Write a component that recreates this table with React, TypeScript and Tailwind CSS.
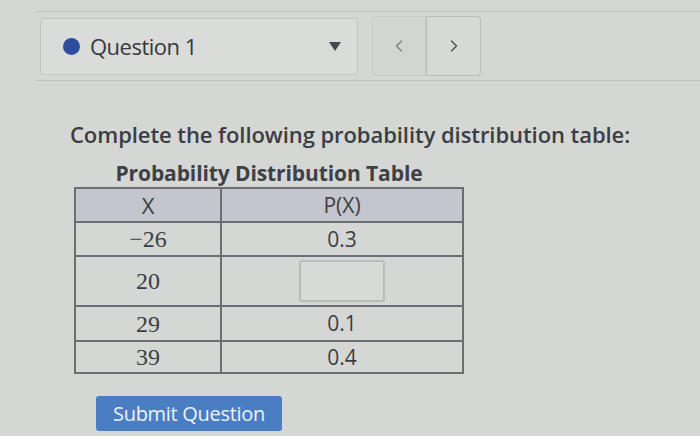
import { ChevronLeft, ChevronRight } from "lucide-react"

const rows = [
  { x: "−26", p: "0.3", h: "h-[34px]" },
  { x: "20", p: null, h: "h-[50px]" },
  { x: "29", p: "0.1", h: "h-[35px]" },
  { x: "39", p: "0.4", h: "h-[32px]" },
]

export default function App() {
  return (
    <div className="w-[700px] h-[436px] overflow-hidden bg-[#d4d7d4] text-[#3b3f45] font-['Open_Sans',sans-serif]">
      {/* Question header */}
      <div className="ml-[36px] mt-[11px] h-[70px] border-y border-[#bfc2c0] flex items-center gap-[14px] pl-[4px]">
        <div className="w-[318px] h-[57px] rounded-[4px] border border-[#c2c5c3] bg-[#d9dcd9] flex items-center pl-[22px] pr-[16px]">
          <span className="w-[17px] h-[17px] rounded-full bg-[#2f4d9c]" />
          <span className="ml-[10px] text-[22px] tracking-[-0.5px] text-[#35393e]">
            Question 1
          </span>
          <span className="ml-auto w-0 h-0 border-x-[6px] border-x-transparent border-t-[9px] border-t-[#45494f]" />
        </div>
        <div className="flex h-[60px]">
          <button className="w-[54px] h-full rounded-l-[4px] border border-[#c8cbc8] bg-[#d2d5d2] flex items-center justify-center">
            <ChevronLeft className="w-[20px] h-[20px] text-[#7c8086]" strokeWidth={1.6} />
          </button>
          <button className="w-[55px] h-full rounded-r-[4px] border border-[#b9bcba] bg-[#d6d9d6] flex items-center justify-center">
            <ChevronRight className="w-[20px] h-[20px] text-[#4a4e54]" strokeWidth={1.6} />
          </button>
        </div>
      </div>

      {/* Question body */}
      <div className="pl-[70px] pt-[38px]">
        <p className="text-[22px] font-semibold leading-[30px] tracking-[-0.07px] text-[#3a3e44]">
          Complete the following probability distribution table:
        </p>

        <div className="ml-[4px] mt-[10px] w-[390px]">
          <div className="text-center text-[21px] font-bold leading-[28px] tracking-[-0.1px] text-[#3d4147]">
            Probability Distribution Table
          </div>
          <table className="w-full border-collapse border-2 border-[#6b6e72] text-[21px]">
            <thead>
              <tr className="h-[34px] bg-[#c3c6cc]">
                <th className="w-[146px] border-2 border-[#6b6e72] font-normal leading-none text-[22px]">X</th>
                <th className="border-2 border-[#6b6e72] font-normal leading-none">P(X)</th>
              </tr>
            </thead>
            <tbody>
              {rows.map((r) => (
                <tr key={r.x} className={r.h}>
                  <td className="border-2 border-[#6b6e72] text-center font-['Liberation_Serif','DejaVu_Serif',serif] text-[24px] leading-none">
                    {r.x}
                  </td>
                  <td className="border-2 border-[#6b6e72] text-center leading-none">
                    {r.p ?? (
                      <span className="inline-block align-middle w-[86px] h-[42px] rounded-[3px] border-2 border-[#b9bcbb] bg-[#d7dad7]" />
                    )}
                  </td>
                </tr>
              ))}
            </tbody>
          </table>
        </div>

        <button className="ml-[26px] mt-[22px] h-[35px] px-[17px] rounded-[3px] bg-[#4a7ec3] text-[20px] text-[#eef2f8] tracking-[-0.3px]">
          Submit Question
        </button>
      </div>
    </div>
  )
}
